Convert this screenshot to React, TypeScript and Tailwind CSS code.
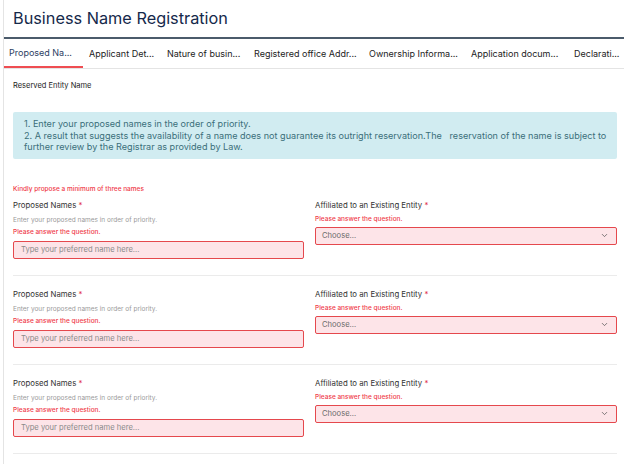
import { ChevronDown } from 'lucide-react';

const tabs = [
  { label: 'Proposed Na...', w: 'w-[79px]' },
  { label: 'Applicant Det...', w: 'w-[78px]' },
  { label: 'Nature of busin...', w: 'w-[87px]' },
  { label: 'Registered office Addr...', w: 'w-[115px]' },
  { label: 'Ownership Informa...', w: 'w-[102px]' },
  { label: 'Application docum...', w: 'w-[103px]' },
  { label: 'Declarati...', w: 'w-[56px]' },
];

const NameRow = ({ first }: { first?: boolean }) => (
  <div className={`grid grid-cols-[291px_1fr] gap-[11px] ${first ? 'pt-0' : 'pt-[12px]'} pb-[16px] border-b border-[#ebebeb]`}>
    <div>
      <div className="text-[7.8px] text-[#333] leading-[12px]">
        Proposed Names <span className="text-[#e0314b]">*</span>
      </div>
      <div className="mt-[4px] text-[6.5px] text-[#9a9a9a] leading-[10px]">Enter your proposed names in order of priority.</div>
      <div className="mt-[2px] text-[6.5px] font-medium text-[#ef3b4a] leading-[10px]">Please answer the question.</div>
      <div className="mt-[4px] h-[18px] border border-[#e5484d] rounded-[2px] bg-[#fde4e8] flex items-center px-[7px] text-[7.6px] text-[#8a8a8a]">
        Type your preferred name here...
      </div>
    </div>
    <div>
      <div className="text-[7.8px] text-[#333] leading-[12px]">
        Affiliated to an Existing Entity <span className="text-[#e0314b]">*</span>
      </div>
      <div className="mt-[3px] text-[6.5px] font-medium text-[#ef3b4a] leading-[10px]">Please answer the question.</div>
      <div className="mt-[3px] h-[18px] border border-[#e5484d] rounded-[2px] bg-[#fde4e8] flex items-center justify-between pl-[6px] pr-[7px] text-[7.6px] text-[#6b6b6b]">
        <span>Choose...</span>
        <ChevronDown size={9} strokeWidth={2} className="text-[#555]" />
      </div>
    </div>
  </div>
);

export default function App() {
  return (
    <div className="w-[624px] h-[464px] overflow-hidden bg-white font-['Inter',sans-serif] flex">
      <div className="w-[4px] border-r border-[#e4e4e4] shrink-0" />
      <div className="flex-1 min-w-0">
        <div className="h-[37px] pl-[9px] pt-[6px]">
          <h1 className="text-[16.3px] leading-[24px] text-[#15294b] font-normal">Business Name Registration</h1>
        </div>
        <div className="h-[2px] bg-[#4b5b6b]" />
        <div className="flex h-[30px] border-b border-[#e4e4e4] whitespace-nowrap overflow-hidden">
          {tabs.map((t, i) => (
            <div
              key={t.label}
              className={`${t.w} shrink-0 flex items-center text-[9px] ${i === 0 ? 'pl-[5px] text-[#2c3e63] border-b-2 border-[#ef4d52]' : 'pl-[6px] text-[#222]'}`}
            >
              {t.label}
            </div>
          ))}
        </div>
        <div className="pl-[9px] pr-[7px]">
          <div className="pt-[12px] text-[7.5px] text-[#222] leading-[10px]">Reserved Entity Name</div>
          <div className="mt-[21px] bg-[#d1ecf1] rounded-[2px] pl-[11px] pr-[4px] py-[6px] text-[9.1px] leading-[11.5px] text-[#3b6f7a]">
            <div>1. Enter your proposed names in the order of priority.</div>
            <div className="whitespace-nowrap">
              2. A result that suggests the availability of a name does not guarantee its outright reservation.The&nbsp;&nbsp; reservation of the name is subject to
            </div>
            <div>further review by the Registrar as provided by Law.</div>
          </div>
          <div className="mt-[25px] text-[6.5px] font-medium text-[#ef3b4a] leading-[10px]">Kindly propose a minimum of three names</div>
          <div className="mt-[5px]">
            <NameRow first />
            <NameRow />
            <NameRow />
          </div>
        </div>
      </div>
    </div>
  );
}
